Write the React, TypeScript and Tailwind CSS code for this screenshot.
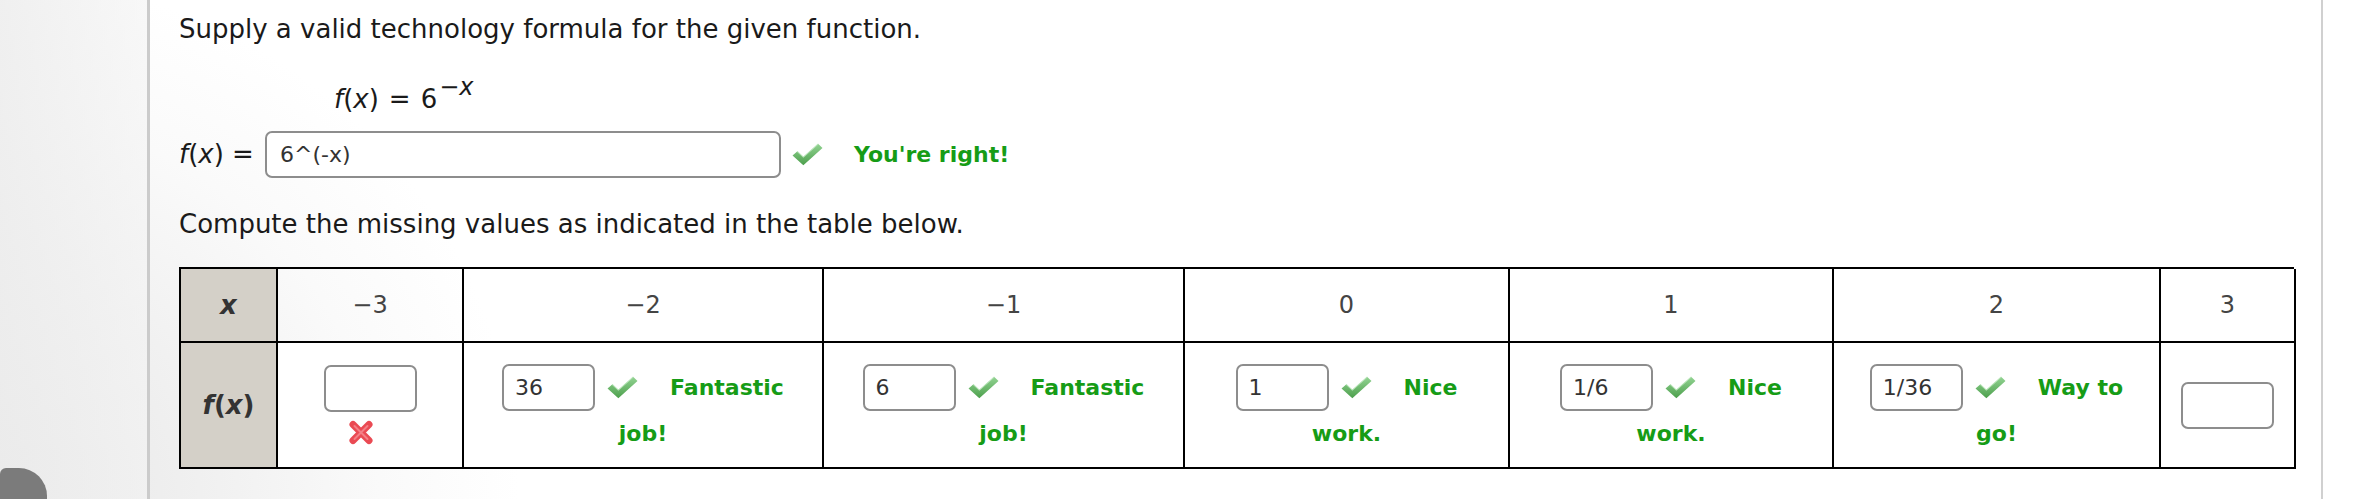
import React from "react";

function Check() {
  return (
    <svg width="31" height="23" viewBox="0 0 30 22" className="shrink-0">
      <defs>
        <linearGradient id="chkg" x1="0" y1="0" x2="0" y2="1">
          <stop offset="0" stopColor="#92d392" />
          <stop offset="1" stopColor="#4c9f4c" />
        </linearGradient>
      </defs>
      <path d="M0.5 12 L5 8 L11 13.5 L25.5 0.8 L29.5 4.8 L11 21.5 Z" fill="url(#chkg)" />
      <path d="M5 8 L11 13.5 L25.5 0.8" fill="none" stroke="#b5e3b5" strokeWidth="1" />
    </svg>
  );
}

function Cross() {
  return (
    <svg width="26" height="25" viewBox="0 0 26 25">
      <path d="M5 4.5 L21 20.5 M21 4.5 L5 20.5" stroke="#ea4a53" strokeWidth="7" strokeLinecap="round" />
      <path d="M6.5 6 L19.5 19 M19.5 6 L6.5 19" stroke="#f47f86" strokeWidth="2" strokeLinecap="round" />
    </svg>
  );
}

function Box({ value }: { value?: string }) {
  return (
    <div className="flex h-[47px] w-[93px] shrink-0 items-center rounded-[7px] border-2 border-[#8d8d8d] bg-white pl-[11px] text-[22px] text-[#333]">
      {value}
    </div>
  );
}

function Answer({ value, first, second }: { value: string; first: string; second: string }) {
  return (
    <div className="flex flex-col items-center">
      <div className="flex h-[47px] items-center">
        <Box value={value} />
        <span className="ml-[12px]">
          <Check />
        </span>
        <span className="ml-[32px] text-[22px] font-bold text-[#169c16]">{first}</span>
      </div>
      <div className="mt-[10px] text-[22px] font-bold leading-[26px] text-[#169c16]">{second}</div>
    </div>
  );
}

const head = "flex items-center justify-center border-r-2 border-b-2 border-black text-[24px] text-[#444]";

export default function App() {
  return (
    <div className="relative flex h-[499px] w-[2360px] overflow-hidden bg-white bg-[radial-gradient(circle_at_0%_100%,#e6e6e6_0px,#f1f1f1_220px,#fafafa_380px,#ffffff_520px)] font-['DejaVu_Sans',Verdana,sans-serif] text-[#1a1a1a]">
      <aside className="w-[150px] shrink-0 border-r-[3px] border-[#cbcbcb] bg-gradient-to-r from-[#ececec]/80 to-[#f3f3f3]/60" />
      <main className="w-[2173px] shrink-0 border-r-2 border-[#d0d0d0] pl-[29px] pt-[14px]">
        <p className="text-[26px] leading-[30px]">Supply a valid technology formula for the given function.</p>
        <div className="mt-[40px] ml-[155px] text-[26px] leading-[30px]">
          <i>f</i>(<i>x</i>)<span className="mx-[10px]">=</span>6
          <span className="relative -top-[13px] ml-[2px] text-[24px]">
            −<i>x</i>
          </span>
        </div>
        <div className="mt-[16px] flex h-[47px] items-center">
          <span className="w-[86px] text-[26px]">
            <i>f</i>(<i>x</i>) =
          </span>
          <div className="flex h-[47px] w-[516px] items-center rounded-[7px] border-2 border-[#8d8d8d] bg-white pl-[13px] text-[22px] text-[#333]">
            6^(-x)
          </div>
          <span className="ml-[11px]">
            <Check />
          </span>
          <span className="ml-[31px] text-[22px] font-bold text-[#169c16]">You're right!</span>
        </div>
        <p className="mt-[31px] text-[26px] leading-[30px]">Compute the missing values as indicated in the table below.</p>
        <div className="mt-[28px] grid w-[2115px] grid-cols-[97px_186px_360px_361px_325px_324px_327px_135px] grid-rows-[74px_126px] border-t-2 border-l-2 border-black">
          <div className="flex items-center justify-center border-r-2 border-b-2 border-black bg-[#d4d0c8] text-[26px] font-bold italic text-[#333]">
            x
          </div>
          <div className={head}>−3</div>
          <div className={head}>−2</div>
          <div className={head}>−1</div>
          <div className={head}>0</div>
          <div className={head}>1</div>
          <div className={head}>2</div>
          <div className={head}>3</div>

          <div className="flex items-center justify-center border-r-2 border-b-2 border-black bg-[#d4d0c8] text-[26px] font-bold text-[#333]">
            <i>f</i>(<i>x</i>)
          </div>
          <div className="flex flex-col items-center justify-center border-r-2 border-b-2 border-black bg-white">
            <Box />
            <div className="mt-[8px] mr-[19px]">
              <Cross />
            </div>
          </div>
          <div className="flex items-center justify-center border-r-2 border-b-2 border-black bg-white">
            <Answer value="36" first="Fantastic" second="job!" />
          </div>
          <div className="flex items-center justify-center border-r-2 border-b-2 border-black bg-white">
            <Answer value="6" first="Fantastic" second="job!" />
          </div>
          <div className="flex items-center justify-center border-r-2 border-b-2 border-black bg-white">
            <Answer value="1" first="Nice" second="work." />
          </div>
          <div className="flex items-center justify-center border-r-2 border-b-2 border-black bg-white">
            <Answer value="1/6" first="Nice" second="work." />
          </div>
          <div className="flex items-center justify-center border-r-2 border-b-2 border-black bg-white">
            <Answer value="1/36" first="Way to" second="go!" />
          </div>
          <div className="flex items-center justify-center border-r-2 border-b-2 border-black bg-white">
            <Box />
          </div>
        </div>
      </main>
      <div className="absolute left-0 top-[468px] h-[31px] w-[47px] rounded-tl-[6px] rounded-tr-[28px] bg-[#7b7b7b]" />
    </div>
  );
}
